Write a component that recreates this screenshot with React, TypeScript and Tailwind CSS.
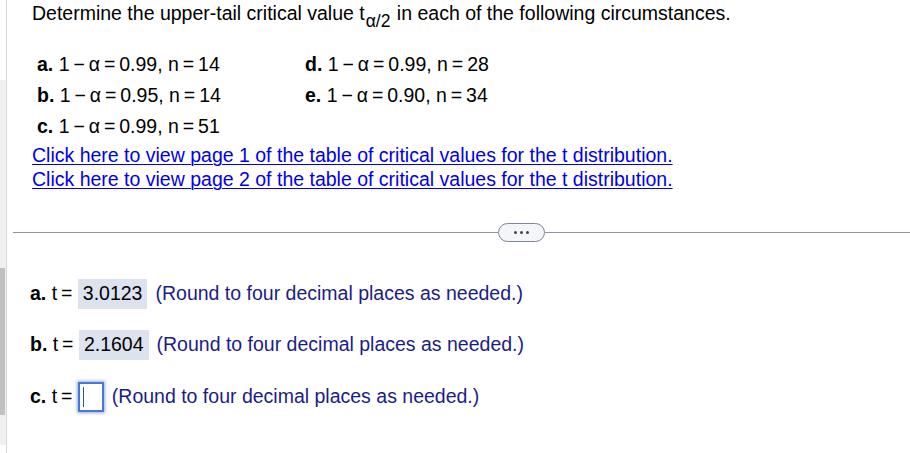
import React from "react";

const items = [
  { label: "a.", p: "0.99", n: "14" },
  { label: "b.", p: "0.95", n: "14" },
  { label: "c.", p: "0.99", n: "51" },
];
const itemsRight = [
  { label: "d.", p: "0.99", n: "28" },
  { label: "e.", p: "0.90", n: "34" },
];

function Condition({ label, p, n }: { label: string; p: string; n: string }) {
  return (
    <div className="h-[31px] flex items-center whitespace-nowrap">
      <span className="font-bold">{label}</span>
      <span>&nbsp;1&thinsp;&minus;&thinsp;&alpha;&thinsp;=&thinsp;{p}, n&thinsp;=&thinsp;{n}</span>
    </div>
  );
}

function Answer({ label, value }: { label: string; value?: string }) {
  return (
    <div className="flex items-center h-[30px] whitespace-nowrap">
      <span className="font-bold">{label}</span>
      <span>&nbsp;t&thinsp;=&nbsp;</span>
      {value ? (
        <span className="bg-[#dce3ee] h-[30px] px-[5px] flex items-center">{value}</span>
      ) : (
        <span className="w-[26px] h-[30px] border-2 border-[#4a78d0] shadow-[0_0_3px_1px_rgba(74,120,208,0.6)] flex items-center pl-[3px]">
          <span className="w-px h-[20px] bg-[#2255bb]" />
        </span>
      )}
      <span className="text-[#1c1c88] ml-[8px]">(Round to four decimal places as needed.)</span>
    </div>
  );
}

export default function App() {
  return (
    <div className="w-[910px] h-[453px] bg-white flex text-black font-['Liberation_Sans',Arial,sans-serif] overflow-hidden">
      {/* left panel edge */}
      <div className="w-[7px] shrink-0 flex flex-col border-r border-[#d3d7df]">
        <div className="h-[80px] bg-white" />
        <div className="flex-1 bg-[#f0f0f0] flex flex-col">
          <div className="h-[188px]" />
          <div className="h-[147px] w-[5px] bg-[#c1c1c1]" />
        </div>
        <div className="h-[8px] bg-white" />
      </div>

      <div className="flex-1 flex flex-col">
        <div className="pl-[25px] pt-[1px] text-[19.5px] leading-[24px] whitespace-nowrap">
          Determine the upper-tail critical value t
          <span className="text-[17.5px] relative top-[7px] ml-[1px] mr-[1px]">&alpha;/2</span> in each of the following circumstances.
        </div>

        <div className="pl-[30px] pt-[23px] text-[19.5px] flex">
          <div className="w-[268px]">
            {items.map((it) => (
              <Condition key={it.label} {...it} />
            ))}
          </div>
          <div>
            {itemsRight.map((it) => (
              <Condition key={it.label} {...it} />
            ))}
          </div>
        </div>

        <div className="pl-[25px] pt-[1px] text-[19.5px] leading-[24px] text-[#0000ee] underline decoration-1 underline-offset-2">
          <div>Click here to view page 1 of the table of critical values for the t distribution.</div>
          <div>Click here to view page 2 of the table of critical values for the t distribution.</div>
        </div>

        <div className="mt-[32px] ml-[6px] flex items-center">
          <div className="flex-1 h-px bg-[#8a94a6]" />
          <div className="w-[47px] h-[19px] rounded-full border border-[#7d8798] bg-[#f3f5f8] flex items-center justify-center gap-[3px]">
            <span className="w-[3px] h-[3px] rounded-full bg-[#3d4656]" />
            <span className="w-[3px] h-[3px] rounded-full bg-[#3d4656]" />
            <span className="w-[3px] h-[3px] rounded-full bg-[#3d4656]" />
          </div>
          <div className="w-[365px] h-px bg-[#8a94a6]" />
        </div>

        <div className="pl-[23px] pt-[37px] text-[19.5px] flex flex-col gap-[21px]">
          <Answer label="a." value="3.0123" />
          <Answer label="b." value="2.1604" />
          <div className="pt-[1px]">
            <Answer label="c." />
          </div>
        </div>
      </div>
    </div>
  );
}
